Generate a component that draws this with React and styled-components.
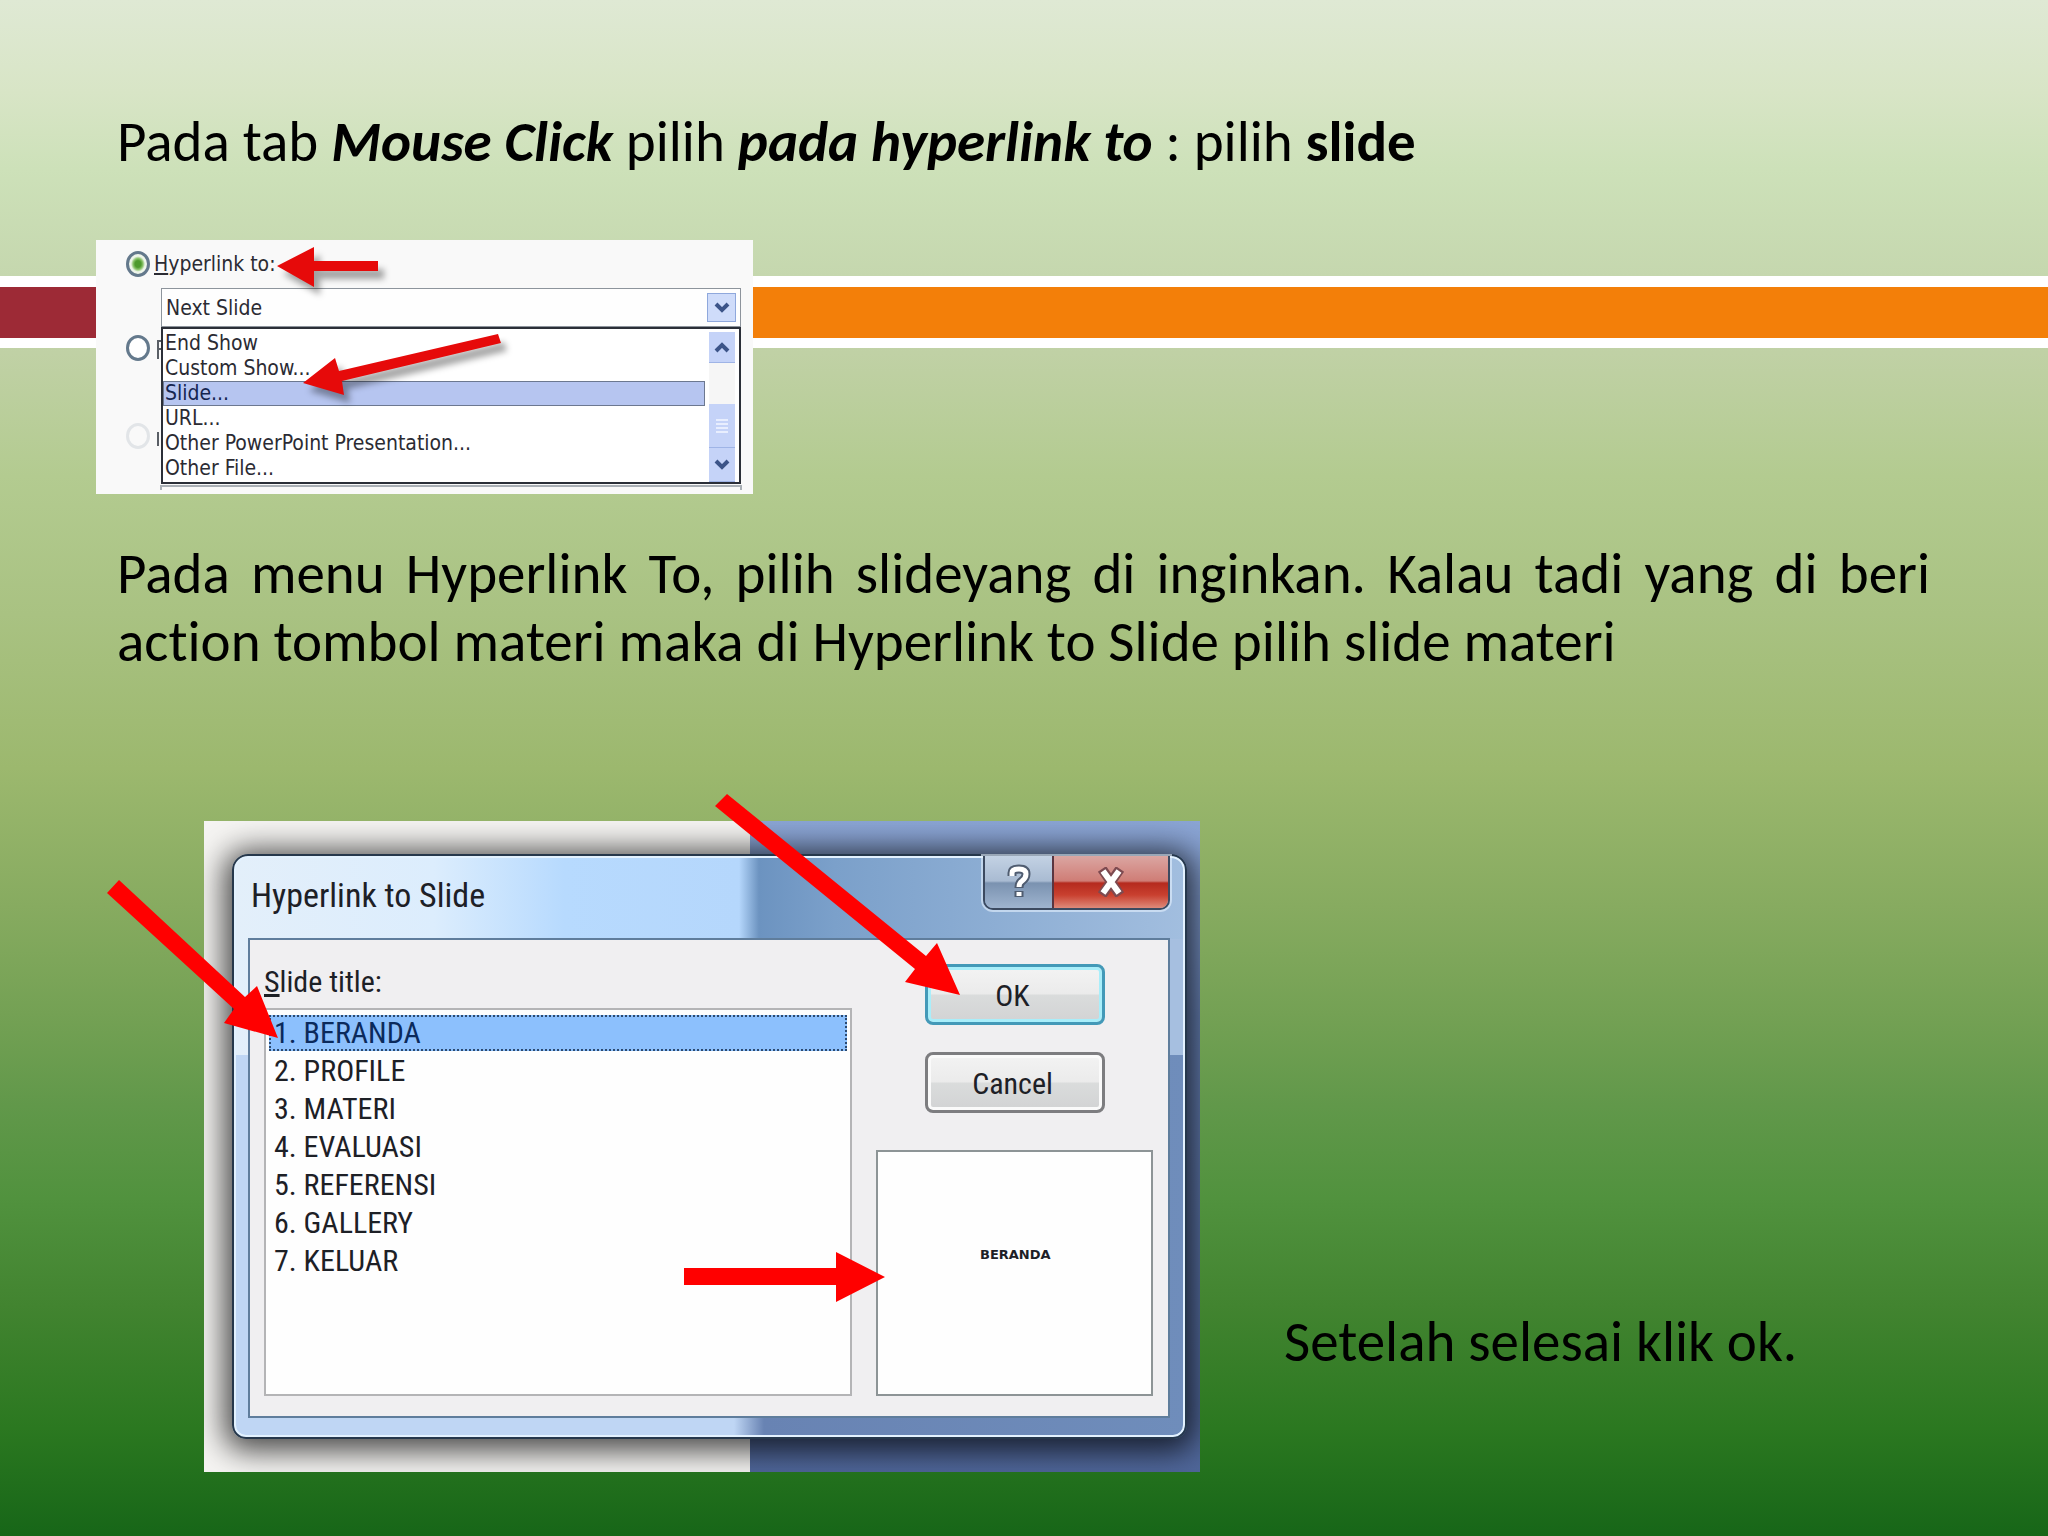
import React from 'react'
import styled, { createGlobalStyle } from 'styled-components'

const GlobalStyle = createGlobalStyle`
  * {
    box-sizing: border-box;
  }
  body {
    margin: 0;
  }
`

const Slide = styled.main`
  min-height: 100vh;
  padding: 108px 0 64px;
  display: flex;
  flex-direction: column;
  color: #000;
  background: linear-gradient(
    #dfe9d4 0%, #d8e5c6 6%, #cde1b9 11%, #c5d7ae 18%, #c0d1a5 23%,
    #b3cb90 31%, #a9c282 40%, #9cb86e 50%, #87ab60 59%, #74a154 66%,
    #61984a 72%, #51923e 78%, #428430 85%, #2b7820 93%, #176618 100%
  );
`

const Text = styled.p`
  margin: 0;
  padding: 0 118px 0 117px;
  font-family: Carlito, Calibri, Lato, sans-serif;
  font-size: 57px;
  line-height: 68px;
  font-variant-ligatures: none;
  text-align: ${p => p.$justify ? 'justify' : 'left'};
`

const Divider = styled.div`
  display: grid;
  margin: 64px 0 46px;
  > * {
    grid-area: 1 / 1;
  }
`

const Band = styled.div`
  display: flex;
  gap: 8px;
  height: 72px;
  margin-top: 36px;
  padding: 11px 0 10px;
  background: #fff;
`

const BandPart = styled.div`
  flex: ${p => p.$flex};
  background: ${p => p.$color};
`

const OptionsPicture = styled.section`
  position: relative;
  width: 657px;
  height: 254px;
  margin-left: 96px;
  padding: 0 12px 0 30px;
  background: #f9f9f9;
  color: #2b2b33;
  font-family: 'DejaVu Sans Condensed', 'DejaVu Sans', sans-serif;
  font-size: 21px;
`

const RadioRow = styled.div`
  display: flex;
  align-items: center;
  gap: 4px;
  height: 48px;
`

const Radio = styled.input`
  appearance: none;
  width: 24px;
  height: 26px;
  margin: 0;
  flex: none;
  border: 3px solid #64798c;
  border-radius: 50%;
  background: #fff;
  opacity: ${p => p.disabled ? 0.15 : 1};
  &:checked {
    background: radial-gradient(#4d9a2c 3px, #8cc46c 5px, #eef5ea 7px);
  }
`

const OptionsBody = styled.div`
  display: flex;
`

const RadioColumn = styled.div`
  display: flex;
  flex-direction: column;
  gap: 62px;
  width: 35px;
  padding-top: 47px;
`

const Dropdown = styled.div`
  flex: 1;
  display: flex;
  flex-direction: column;
`

const SelectBox = styled.div`
  display: grid;
  height: 39px;
  > * {
    grid-area: 1 / 1;
  }
`

const Select = styled.select`
  appearance: none;
  width: 100%;
  padding: 0 4px;
  border: 1px solid #8d949c;
  border-radius: 0;
  background: #fefefe;
  color: inherit;
  font: inherit;
`

const SelectArrow = styled.span`
  justify-self: end;
  align-self: center;
  display: flex;
  align-items: center;
  justify-content: center;
  width: 29px;
  height: 29px;
  margin-right: 5px;
  border: 1px solid #8fa8dc;
  background: #cfdcfa;
  pointer-events: none;
`

const List = styled.div`
  display: flex;
  height: 157px;
  border: 2px solid #2b2f38;
  background: #fff;
`

const Options = styled.ul`
  flex: 1;
  margin: 0;
  padding: 2px 0 0;
  list-style: none;
`

const Option = styled.li`
  height: 25px;
  padding: 0 1px;
  line-height: 23px;
  border: 1px solid ${p => p.$selected ? '#6c7890' : 'transparent'};
  background: ${p => p.$selected ? '#b6c5f0' : 'none'};
  color: ${p => p.$selected ? '#152550' : 'inherit'};
`

const Scrollbar = styled.div`
  display: flex;
  flex-direction: column;
  justify-content: space-between;
  width: 26px;
  margin: 3px 4px 0;
  background: #f6f6f6;
`

const ScrollPart = styled.span`
  display: flex;
  flex-direction: column;
  align-items: center;
  justify-content: center;
  gap: 2px;
  height: ${p => p.$height}px;
  margin-top: ${p => p.$push ? 'auto' : 0};
  background: #c5d3f8;
  border-bottom: 1px solid #9fb4e6;
`

const Grip = styled.i`
  width: 12px;
  height: 2px;
  background: #e8eefe;
`

const Overlay = styled.svg`
  position: absolute;
  inset: 0;
  width: 100%;
  height: 100%;
  overflow: visible;
  pointer-events: none;
`

const Bottom = styled.div`
  display: flex;
  align-items: flex-end;
  margin-top: 145px;
  padding-left: 204px;
`

const DialogPicture = styled.div`
  position: relative;
  flex: none;
  width: 996px;
`

const Desktop = styled.div`
  height: 651px;
  padding: 33px 13px 33px 28px;
  overflow: hidden;
  background:
    linear-gradient(#8ba5d4, #6781b4 30%, #4f6699) right / 450px 100% no-repeat,
    #f5f4f2;
`

const Dialog = styled.section`
  display: flex;
  flex-direction: column;
  height: 100%;
  padding: 0 15px 19px 14px;
  border: 2px solid #26384c;
  border-radius: 16px 16px 14px 14px;
  box-shadow: inset 0 0 0 2px #e3f2ff, 0 4px 30px 8px rgba(0, 0, 0, 0.7);
  background:
    linear-gradient(90deg, transparent 95%, #a6bfe0 98%) 0 83px / 100% 116px no-repeat,
    linear-gradient(90deg, #e3effa, #dcedfd 200px, #b7dafe 330px, #b5d7fc 505px, #6c93c0 525px, #7ba0ca 600px, #a2bedf) top / 100% 199px no-repeat,
    linear-gradient(90deg, #bfd6f4 500px, #6883b3 530px, #6f8dbb);
  font-family: 'Roboto Condensed', 'Open Sans', sans-serif;
  font-size: 30px;
  line-height: 36px;
  color: #1d2026;
`

const TitleBar = styled.header`
  display: flex;
  justify-content: space-between;
  height: 82px;
`

const Title = styled.h2`
  margin: 18px 0 0 3px;
  font-size: 34px;
  font-weight: 400;
  line-height: 42px;
`

const WindowButtons = styled.div`
  display: flex;
  height: 54px;
  border: 2px solid #3c4a60;
  border-top: 0;
  border-radius: 0 0 10px 10px;
  box-shadow: 0 0 0 2px rgba(230, 242, 255, 0.6);
  overflow: hidden;
`

const WindowButton = styled.button`
  display: flex;
  align-items: center;
  justify-content: center;
  width: ${p => p.$close ? 116 : 67}px;
  padding: 0;
  border: 0;
  border-left: ${p => p.$close ? '2px solid #5a3540' : 0};
  background: ${p => p.$close
    ? 'linear-gradient(#dba6a2, #cf7d76 48%, #b52a1e 52%, #c9402f 75%, #df8a7a)'
    : 'linear-gradient(#c3d2e4, #a9bbd2 48%, #7a92b0 52%, #9fb4cf)'};
`

const Client = styled.div`
  flex: 1;
  display: flex;
  gap: 24px;
  padding: 24px 15px 20px 14px;
  border: 2px solid #5f7d9c;
  background: #f0eff1;
`

const ListColumn = styled.div`
  flex: 1;
  display: flex;
  flex-direction: column;
  gap: 8px;
`

const SlideList = styled.ul`
  flex: 1;
  display: flex;
  flex-direction: column;
  gap: 2px;
  margin: 0;
  padding: 5px 3px;
  list-style: none;
  border: 2px solid #b4b4b6;
  background: #fefefe;
`

const SlideItem = styled.li`
  height: 36px;
  padding: 0 3px;
  line-height: 32px;
  border: 2px dotted ${p => p.$selected ? '#2c4a70' : 'transparent'};
  background: ${p => p.$selected ? '#8cc0fd' : 'none'};
  color: ${p => p.$selected ? '#0b2a5c' : 'inherit'};
`

const SideColumn = styled.div`
  display: flex;
  flex-direction: column;
  align-items: center;
  gap: 27px;
  width: 277px;
`

const Button = styled.button`
  width: 180px;
  height: 61px;
  padding: 3px 4px 0 0;
  border: 3px solid ${p => p.$primary ? '#4399b8' : '#7d7d80'};
  border-radius: 8px;
  box-shadow: inset 0 0 0 3px ${p => p.$primary ? '#a9eefa' : '#fafafa'};
  background: linear-gradient(#f3f3f3, #ebebeb 49%, #dadcdc 51%, #d2d3d4);
  color: inherit;
  font: inherit;
`

const Preview = styled.div`
  flex: 1;
  align-self: stretch;
  margin-top: 10px;
  padding: 94px 0 0 102px;
  border: 2px solid #8d9496;
  background: #fefefe;
  font-family: 'DejaVu Sans', sans-serif;
  font-size: 13px;
  font-weight: 700;
  line-height: 18px;
`

const Chevron = ({ up }) => (
  <svg width='16' height='12' viewBox='0 0 16 12' fill='none' stroke='#3c5488' strokeWidth='4'>
    <path d={up ? 'M2 10l6-6 6 6' : 'M2 2l6 6 6-6'} />
  </svg>
)

const targets = ['End Show', 'Custom Show...', 'Slide...', 'URL...', 'Other PowerPoint Presentation...', 'Other File...']
const slides = ['BERANDA', 'PROFILE', 'MATERI', 'EVALUASI', 'REFERENSI', 'GALLERY', 'KELUAR']

const HyperlinkOptions = () => (
  <OptionsPicture>
    <RadioRow>
      <Radio type='radio' name='action' id='hyperlink' defaultChecked />
      <label htmlFor='hyperlink'><u>H</u>yperlink to:</label>
    </RadioRow>
    <OptionsBody>
      <RadioColumn>
        <Radio type='radio' name='action' aria-label='Run program' />
        <Radio type='radio' name='action' aria-label='Run macro' disabled />
      </RadioColumn>
      <Dropdown>
        <SelectBox>
          <Select aria-label='Hyperlink to' defaultValue='next'>
            <option value='next'>Next Slide</option>
          </Select>
          <SelectArrow><Chevron /></SelectArrow>
        </SelectBox>
        <List>
          <Options role='listbox' aria-label='Targets'>
            {targets.map(target => (
              <Option key={target} role='option' aria-selected={target === 'Slide...'} $selected={target === 'Slide...'}>{target}</Option>
            ))}
          </Options>
          <Scrollbar>
            <ScrollPart $height={31}><Chevron up /></ScrollPart>
            <ScrollPart $height={44} $push><Grip /><Grip /><Grip /><Grip /></ScrollPart>
            <ScrollPart $height={34}><Chevron /></ScrollPart>
          </Scrollbar>
        </List>
      </Dropdown>
    </OptionsBody>
    <Overlay viewBox='0 0 657 254'>
      <path d='M62 100V119M62 101H65M62 109H65M62 192V206' stroke='#5a5f66' strokeWidth='2' />
      <g fill='#e60a0a' style={{ filter: 'drop-shadow(6px 8px 3px rgba(0,0,0,.35))' }}>
        <path d='M181 26L218 7V21H282V31H218V47Z' />
        <path d='M207 143L239 118L243 131L402 94L405 103L246 141L248 155Z' />
      </g>
      <path d='M65 250V246H645V250' fill='none' stroke='#aab0b6' strokeWidth='2' />
    </Overlay>
  </OptionsPicture>
)

const SlideDialog = () => (
  <DialogPicture>
    <Desktop>
      <Dialog>
        <TitleBar>
          <Title>Hyperlink to Slide</Title>
          <WindowButtons>
            <WindowButton aria-label='Help'>
              <svg width='26' height='36' viewBox='0 0 26 36' fill='none'>
                <path d='M6 12V9Q6 5 13 5T20 10Q20 14 16 17Q13 19 13 24M13 27V33' stroke='#4f5c70' strokeWidth='9' />
                <path d='M6 12V9Q6 5 13 5T20 10Q20 14 16 17Q13 19 13 23M13 28V32' stroke='#fff' strokeWidth='5' />
              </svg>
            </WindowButton>
            <WindowButton $close aria-label='Close'>
              <svg width='30' height='30' viewBox='0 0 30 30' fill='none'>
                <path d='M6 2L24 28M24 2L6 28' stroke='#7d4a50' strokeWidth='10' />
                <path d='M7 4L23 26M23 4L7 26' stroke='#fff' strokeWidth='6' />
              </svg>
            </WindowButton>
          </WindowButtons>
        </TitleBar>
        <Client>
          <ListColumn>
            <span id='slide-title'><u>S</u>lide title:</span>
            <SlideList role='listbox' aria-labelledby='slide-title'>
              {slides.map((name, i) => (
                <SlideItem key={name} role='option' aria-selected={i === 0} $selected={i === 0}>{i + 1}. {name}</SlideItem>
              ))}
            </SlideList>
          </ListColumn>
          <SideColumn>
            <Button $primary>OK</Button>
            <Button>Cancel</Button>
            <Preview>BERANDA</Preview>
          </SideColumn>
        </Client>
      </Dialog>
    </Desktop>
    <Overlay viewBox='0 0 996 651' fill='#ff0000'>
      <path d='M74 217L20 202L30 188L-97 72L-85 59L41 176L53 165Z' />
      <path d='M756 174L701 161L711 148L511 -15L523 -27L722 135L733 122Z' />
      <path d='M681 456L632 481V464H480V447H632V431Z' />
    </Overlay>
  </DialogPicture>
)

const Closing = styled(Text)`
  margin-bottom: 96px;
  padding: 0 0 0 84px;
`

const App = () => (
  <>
    <GlobalStyle />
    <Slide>
      <Text>
        Pada tab <b><i>Mouse Click</i></b> pilih <b><i>pada hyperlink to</i></b> : pilih <b>slide</b>
      </Text>
      <Divider>
        <Band>
          <BandPart $flex='0 0 6%' $color='#9d2a36' />
          <BandPart $flex='1' $color='#f37f09' />
        </Band>
        <HyperlinkOptions />
      </Divider>
      <Text $justify>
        Pada menu Hyperlink To, pilih slideyang di inginkan. Kalau tadi yang di beri action tombol materi maka di Hyperlink to Slide pilih slide materi
      </Text>
      <Bottom>
        <SlideDialog />
        <Closing>Setelah selesai klik ok.</Closing>
      </Bottom>
    </Slide>
  </>
)

export default App
